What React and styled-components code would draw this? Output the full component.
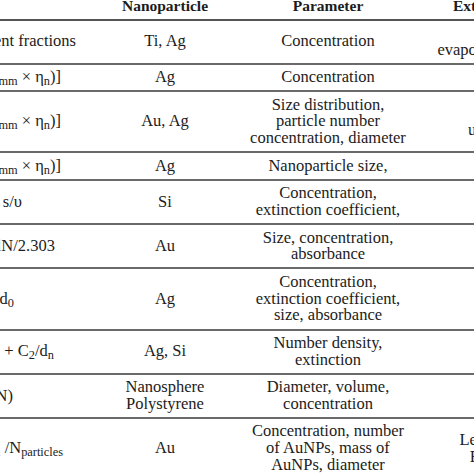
import React from "react";
import styled, { createGlobalStyle } from "styled-components";

const GlobalStyle = createGlobalStyle`
  html, body {
    margin: 0;
    padding: 0;
    background: #fff;
    overflow: hidden;
  }
  body {
    font-family: "Liberation Serif", "Times New Roman", serif;
    color: #1c1c1c;
  }
`;

const Page = styled.div`
  width: 474px;
  height: 474px;
  overflow: hidden;
  background: #fff;
`;

const Table = styled.table`
  border-collapse: separate;
  border-spacing: 0;
  table-layout: fixed;
  width: 812px;
  margin: -6.8px 0 0 -200px;
  font-size: 16.5px;
  line-height: 16.75px;
`;

const Col = styled.col`
  width: ${(p) => p.$w}px;
`;

const HeadCell = styled.th`
  padding: 4.4px 6px 4.2px;
  border-bottom: 2px solid #555;
  font-size: 15.5px;
  font-weight: bold;
  text-align: center;
  white-space: nowrap;
`;

const Cell = styled.td`
  padding: 4.4px 6px;
  border-bottom: 2px solid #6a6a6a;
  text-align: center;
  vertical-align: middle;
  white-space: nowrap;
`;

const FormulaCell = styled(Cell)`
  text-align: right;
  padding-right: ${(p) => p.$inset}px;
`;

const Line = styled.div`
  display: block;
`;

const Sub = styled.sub`
  font-size: 0.75em;
  line-height: 0;
  vertical-align: -0.25em;
`;

const rows = [
  { formula: <>Mass ratio of different fractions</>, inset: 24, np: ["Ti, Ag"], param: ["Concentration"], method: ["Thermal", "evaporation and ablation"] },
  { formula: <>N = [Σ(C<Sub>mm</Sub> × η<Sub>n</Sub>)]</>, inset: 39, np: ["Ag"], param: ["Concentration"], method: ["Ablation"] },
  { formula: <>N = [Σ(C<Sub>mm</Sub> × η<Sub>n</Sub>)]</>, inset: 39, np: ["Au, Ag"], param: ["Size distribution,", "particle number", "concentration, diameter"], method: ["Dialysis,", "ultrasonication,"] },
  { formula: <>N = [Σ(C<Sub>mm</Sub> × η<Sub>n</Sub>)]</>, inset: 39, np: ["Ag"], param: ["Nanoparticle size,"], method: ["Filtration"] },
  { formula: <>N = A × s/υ</>, inset: 78, np: ["Si"], param: ["Concentration,", "extinction coefficient,"], method: ["Dialysis"] },
  { formula: <>A = εlN/2.303</>, inset: 45, np: ["Au"], param: ["Size, concentration,", "absorbance"], method: ["Centrifuge"] },
  { formula: <>d = d<Sub>0</Sub></>, inset: 86, np: ["Ag"], param: ["Concentration,", "extinction coefficient,", "size, absorbance"], method: ["Ablation"] },
  { formula: <>N = C<Sub>1</Sub> + C<Sub>2</Sub>/d<Sub>n</Sub></>, inset: 46, np: ["Ag, Si"], param: ["Number density,", "extinction"], method: ["Filtration"] },
  { formula: <>V = f(N)</>, inset: 87, np: ["Nanosphere", "Polystyrene"], param: ["Diameter, volume,", "concentration"], method: ["Dialysis"] },
  { formula: <>N = M<Sub>total</Sub>  /N<Sub>particles</Sub></>, inset: 37, np: ["Au"], param: ["Concentration, number", "of AuNPs, mass of", "AuNPs, diameter"], method: ["Leaching process,", "Filtration steps"] },
];

function Lines({ items }) {
  return items.map((text) => <Line key={text}>{text}</Line>);
}

export default function App() {
  return (
    <Page>
      <GlobalStyle />
      <Table>
        <colgroup>
          <Col $w={300} />
          <Col $w={130} />
          <Col $w={196} />
          <Col $w={186} />
        </colgroup>
        <thead>
          <tr>
            <HeadCell>Equation</HeadCell>
            <HeadCell>Nanoparticle</HeadCell>
            <HeadCell>Parameter</HeadCell>
            <HeadCell>Extraction Methods</HeadCell>
          </tr>
        </thead>
        <tbody>
          {rows.map((row, i) => (
            <tr key={i}>
              <FormulaCell $inset={row.inset}>{row.formula}</FormulaCell>
              <Cell><Lines items={row.np} /></Cell>
              <Cell><Lines items={row.param} /></Cell>
              <Cell><Lines items={row.method} /></Cell>
            </tr>
          ))}
        </tbody>
      </Table>
    </Page>
  );
}
